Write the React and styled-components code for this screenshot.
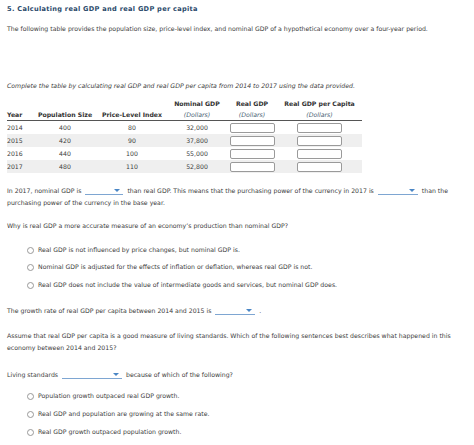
import React from 'react';
import styled, { createGlobalStyle } from 'styled-components';

const GlobalStyle = createGlobalStyle`
  html, body {
    margin: 0;
    padding: 0;
    background: #ffffff;
  }
  body {
    font-family: "DejaVu Sans", Verdana, sans-serif;
    font-size: 6.2px;
    color: #3c3c3c;
  }
`;

const Page = styled.div`
  width: 462px;
  padding: 3px 0 0 7px;
  line-height: 12.5px;
`;

const Title = styled.div`
  font-weight: bold;
  font-size: 6.6px;
  letter-spacing: 0.3px;
  color: #2b4a6b;
`;

const Para = styled.p`
  margin: ${(p) => p.$top || 0}px 0 0 0;
  font-style: ${(p) => (p.$italic ? 'italic' : 'normal')};
`;

const Table = styled.table`
  margin-top: 5px;
  border-collapse: collapse;
  width: 355px;
  table-layout: fixed;
`;

const Th = styled.th`
  font-weight: ${(p) => (p.$sub ? 'normal' : 'bold')};
  font-style: ${(p) => (p.$sub ? 'italic' : 'normal')};
  color: ${(p) => (p.$sub ? '#4a5f75' : '#333333')};
  text-align: ${(p) => (p.$left ? 'left' : 'center')};
  padding: 0;
  height: 11px;
  line-height: 11px;
  white-space: nowrap;
  border-bottom: ${(p) => (p.$line ? '1px solid #555555' : 'none')};
`;

const Tr = styled.tr`
  background: ${(p) => (p.$shade ? '#efefef' : 'transparent')};
`;

const Td = styled.td`
  text-align: ${(p) => (p.$left ? 'left' : 'center')};
  padding: 0;
  height: 13px;
  line-height: 13px;
`;

const Box = styled.span`
  display: inline-block;
  vertical-align: middle;
  width: 43px;
  height: 8px;
  border: 1px solid #9a9a9a;
  border-radius: 2px;
  background: #ffffff;
`;

const Drop = styled.span`
  display: inline-block;
  position: relative;
  width: ${(p) => p.$w}px;
  height: 8px;
  margin: 0 2px 0 2px;
  vertical-align: -2px;
  border-bottom: 1px solid #7ea6d2;
`;

const Arrow = styled.span`
  position: absolute;
  right: 3px;
  top: 3px;
  width: 0;
  height: 0;
  border-left: 3px solid transparent;
  border-right: 3px solid transparent;
  border-top: 3px solid #4a86c5;
`;

const Options = styled.div`
  margin-top: ${(p) => p.$top}px;
  padding-left: 20px;
  display: flex;
  flex-direction: column;
  gap: ${(p) => p.$gap}px;
`;

const Option = styled.label`
  display: flex;
  align-items: center;
  gap: 4px;
  height: 12px;
`;

const Radio = styled.span`
  flex: none;
  width: 5px;
  height: 5px;
  border: 1px solid #999999;
  border-radius: 50%;
  background: #ffffff;
`;

const Dropdown = ({ w }) => (
  <Drop $w={w}>
    <Arrow />
  </Drop>
);

const rows = [
  ['2014', '400', '80', '32,000'],
  ['2015', '420', '90', '37,800'],
  ['2016', '440', '100', '55,000'],
  ['2017', '480', '110', '52,800'],
];

export default function App() {
  return (
    <Page>
      <GlobalStyle />
      <Title>5. Calculating real GDP and real GDP per capita</Title>
      <Para $top={7}>
        The following table provides the population size, price-level index, and nominal GDP of a
        hypothetical economy over a four-year period.
      </Para>
      <Para $top={45} $italic>
        Complete the table by calculating real GDP and real GDP per capita from 2014 to 2017 using
        the data provided.
      </Para>

      <Table>
        <colgroup>
          <col style={{ width: 26 }} />
          <col style={{ width: 64 }} />
          <col style={{ width: 70 }} />
          <col style={{ width: 60 }} />
          <col style={{ width: 50 }} />
          <col style={{ width: 85 }} />
        </colgroup>
        <thead>
          <tr>
            <Th />
            <Th />
            <Th />
            <Th>Nominal GDP</Th>
            <Th>Real GDP</Th>
            <Th>Real GDP per Capita</Th>
          </tr>
          <tr>
            <Th $left $line>Year</Th>
            <Th $line>Population Size</Th>
            <Th $line>Price-Level Index</Th>
            <Th $sub $line>(Dollars)</Th>
            <Th $sub $line>(Dollars)</Th>
            <Th $sub $line>(Dollars)</Th>
          </tr>
        </thead>
        <tbody>
          {rows.map((r, i) => (
            <Tr key={r[0]} $shade={i % 2 === 1}>
              <Td $left>{r[0]}</Td>
              <Td>{r[1]}</Td>
              <Td>{r[2]}</Td>
              <Td>{r[3]}</Td>
              <Td><Box /></Td>
              <Td><Box /></Td>
            </Tr>
          ))}
        </tbody>
      </Table>

      <Para $top={12}>
        In 2017, nominal GDP is <Dropdown w={38} /> than real GDP. This means that the purchasing
        power of the currency in 2017 is <Dropdown w={40} /> than the purchasing power of the
        currency in the base year.
      </Para>

      <Para $top={10}>
        Why is real GDP a more accurate measure of an economy&rsquo;s production than nominal GDP?
      </Para>

      <Options $top={12} $gap={5.5}>
        <Option><Radio />Real GDP is not influenced by price changes, but nominal GDP is.</Option>
        <Option>
          <Radio />Nominal GDP is adjusted for the effects of inflation or deflation, whereas real
          GDP is not.
        </Option>
        <Option>
          <Radio />Real GDP does not include the value of intermediate goods and services, but
          nominal GDP does.
        </Option>
      </Options>

      <Para $top={14}>
        The growth rate of real GDP per capita between 2014 and 2015 is <Dropdown w={40} /> .
      </Para>

      <Para $top={12}>
        Assume that real GDP per capita is a good measure of living standards. Which of the
        following sentences best describes what happened in this economy between 2014 and 2015?
      </Para>

      <Para $top={14}>
        Living standards <Dropdown w={60} /> because of which of the following?
      </Para>

      <Options $top={9} $gap={6}>
        <Option><Radio />Population growth outpaced real GDP growth.</Option>
        <Option><Radio />Real GDP and population are growing at the same rate.</Option>
        <Option><Radio />Real GDP growth outpaced population growth.</Option>
      </Options>
    </Page>
  );
}
